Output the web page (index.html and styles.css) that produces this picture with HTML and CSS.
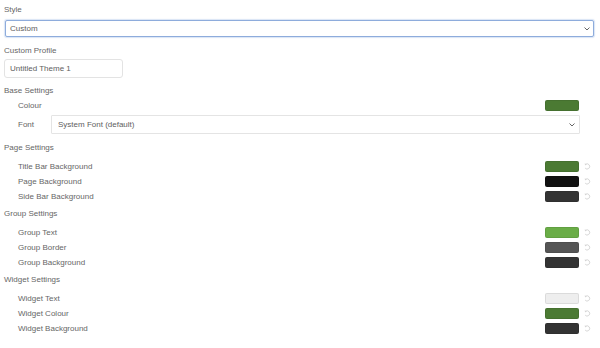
FILE: index.html
```html
<!DOCTYPE html>
<html lang="en">
<head>
    <meta charset="UTF-8">
    <meta name="viewport" content="width=device-width, initial-scale=1.0">
    <title>Theme Settings</title>
    <link rel="stylesheet" href="styles.css">
</head>
<body>
    <div class="settings">
        <div class="label top">Style</div>
        <div class="select style-select">
            <span>Custom</span>
            <svg class="chevron" width="6" height="4" viewBox="0 0 6 4"><path d="M0.5 0.5 L3 3 L5.5 0.5" fill="none" stroke="#666" stroke-width="1"/></svg>
        </div>

        <div class="label profile-label">Custom Profile</div>
        <div class="text-input">Untitled Theme 1</div>

        <div class="label heading base-heading">Base Settings</div>
        <div class="row">
            <span class="name">Colour</span>
            <span class="swatch" style="background:#4b7a33"></span>
            <span class="reset-col"></span>
        </div>
        <div class="row font-row">
            <span class="name font-name">Font</span>
            <div class="select font-select">
                <span>System Font (default)</span>
                <svg class="chevron" width="6" height="4" viewBox="0 0 6 4"><path d="M0.5 0.5 L3 3 L5.5 0.5" fill="none" stroke="#666" stroke-width="1"/></svg>
            </div>
            <span class="reset-col"></span>
        </div>

        <div class="label heading">Page Settings</div>
        <div class="group">
            <div class="row">
                <span class="name">Title Bar Background</span>
                <span class="swatch" style="background:#4b7a33"></span>
                <span class="reset-col"><svg class="reset" width="7" height="7" viewBox="0 0 7 7"><path d="M1.8 1.2 A2.6 2.6 0 1 1 1.2 5.2" fill="none" stroke="#d2d2d2" stroke-width="0.9"/><path d="M0.6 0.4 L2.6 1.1 L1.2 2.6 Z" fill="#d2d2d2"/></svg></span>
            </div>
            <div class="row">
                <span class="name">Page Background</span>
                <span class="swatch" style="background:#111111"></span>
                <span class="reset-col"><svg class="reset" width="7" height="7" viewBox="0 0 7 7"><path d="M1.8 1.2 A2.6 2.6 0 1 1 1.2 5.2" fill="none" stroke="#d2d2d2" stroke-width="0.9"/><path d="M0.6 0.4 L2.6 1.1 L1.2 2.6 Z" fill="#d2d2d2"/></svg></span>
            </div>
            <div class="row">
                <span class="name">Side Bar Background</span>
                <span class="swatch" style="background:#333333"></span>
                <span class="reset-col"><svg class="reset" width="7" height="7" viewBox="0 0 7 7"><path d="M1.8 1.2 A2.6 2.6 0 1 1 1.2 5.2" fill="none" stroke="#d2d2d2" stroke-width="0.9"/><path d="M0.6 0.4 L2.6 1.1 L1.2 2.6 Z" fill="#d2d2d2"/></svg></span>
            </div>
        </div>

        <div class="label heading">Group Settings</div>
        <div class="group">
            <div class="row">
                <span class="name">Group Text</span>
                <span class="swatch" style="background:#6aad47"></span>
                <span class="reset-col"><svg class="reset" width="7" height="7" viewBox="0 0 7 7"><path d="M1.8 1.2 A2.6 2.6 0 1 1 1.2 5.2" fill="none" stroke="#d2d2d2" stroke-width="0.9"/><path d="M0.6 0.4 L2.6 1.1 L1.2 2.6 Z" fill="#d2d2d2"/></svg></span>
            </div>
            <div class="row">
                <span class="name">Group Border</span>
                <span class="swatch" style="background:#555555"></span>
                <span class="reset-col"><svg class="reset" width="7" height="7" viewBox="0 0 7 7"><path d="M1.8 1.2 A2.6 2.6 0 1 1 1.2 5.2" fill="none" stroke="#d2d2d2" stroke-width="0.9"/><path d="M0.6 0.4 L2.6 1.1 L1.2 2.6 Z" fill="#d2d2d2"/></svg></span>
            </div>
            <div class="row">
                <span class="name">Group Background</span>
                <span class="swatch" style="background:#333333"></span>
                <span class="reset-col"><svg class="reset" width="7" height="7" viewBox="0 0 7 7"><path d="M1.8 1.2 A2.6 2.6 0 1 1 1.2 5.2" fill="none" stroke="#d2d2d2" stroke-width="0.9"/><path d="M0.6 0.4 L2.6 1.1 L1.2 2.6 Z" fill="#d2d2d2"/></svg></span>
            </div>
        </div>

        <div class="label heading">Widget Settings</div>
        <div class="group">
            <div class="row">
                <span class="name">Widget Text</span>
                <span class="swatch" style="background:#eeeeee"></span>
                <span class="reset-col"><svg class="reset" width="7" height="7" viewBox="0 0 7 7"><path d="M1.8 1.2 A2.6 2.6 0 1 1 1.2 5.2" fill="none" stroke="#d2d2d2" stroke-width="0.9"/><path d="M0.6 0.4 L2.6 1.1 L1.2 2.6 Z" fill="#d2d2d2"/></svg></span>
            </div>
            <div class="row">
                <span class="name">Widget Colour</span>
                <span class="swatch" style="background:#4b7a33"></span>
                <span class="reset-col"><svg class="reset" width="7" height="7" viewBox="0 0 7 7"><path d="M1.8 1.2 A2.6 2.6 0 1 1 1.2 5.2" fill="none" stroke="#d2d2d2" stroke-width="0.9"/><path d="M0.6 0.4 L2.6 1.1 L1.2 2.6 Z" fill="#d2d2d2"/></svg></span>
            </div>
            <div class="row">
                <span class="name">Widget Background</span>
                <span class="swatch" style="background:#333333"></span>
                <span class="reset-col"><svg class="reset" width="7" height="7" viewBox="0 0 7 7"><path d="M1.8 1.2 A2.6 2.6 0 1 1 1.2 5.2" fill="none" stroke="#d2d2d2" stroke-width="0.9"/><path d="M0.6 0.4 L2.6 1.1 L1.2 2.6 Z" fill="#d2d2d2"/></svg></span>
            </div>
        </div>
    </div>
</body>
</html>
```

FILE: styles.css
```css
body {
    margin: 0;
    padding: 0;
    background-color: #fff;
    font-family: "Liberation Sans", Arial, sans-serif;
    font-size: 8px;
    color: #666;
}

.settings {
    padding: 2px 6px 0 4px;
}

.label {
    line-height: 15px;
}

.select {
    display: flex;
    align-items: center;
    justify-content: space-between;
    box-sizing: border-box;
    background: #fff;
    color: #5e5e5e;
}

.style-select {
    margin: 3px 0 0 1px;
    height: 17px;
    padding: 0 3px 0 4px;
    border: 1px solid #8eacdc;
    border-radius: 2px;
    box-shadow: 0 0 1px 1px rgba(150, 180, 225, 0.35);
}

.profile-label {
    margin-top: 6px;
}

.text-input {
    box-sizing: border-box;
    width: 119px;
    height: 19px;
    margin-top: 1px;
    padding: 0 5px;
    line-height: 17px;
    border: 1px solid #e3e3e3;
    border-radius: 3px;
    color: #5e5e5e;
}

.heading {
    margin-top: 6px;
    margin-bottom: 4px;
}

.base-heading {
    margin-top: 5px;
    margin-bottom: 0;
}

.group {
    margin-bottom: 2px;
}

.group + .heading {
    margin-top: 0;
}

.row {
    display: flex;
    align-items: center;
    height: 15px;
    margin-left: 14px;
}

.name {
    flex: 1;
}

.swatch {
    box-sizing: border-box;
    width: 34px;
    height: 11px;
    border-radius: 2px;
    border: 1px solid rgba(0, 0, 0, 0.08);
}

.reset-col {
    display: flex;
    align-items: center;
    width: 15px;
    padding-left: 5px;
    box-sizing: border-box;
}

.font-row {
    height: 19px;
    margin-top: 2px;
}

.font-name {
    flex: none;
    width: 33px;
}

.font-select {
    flex: 1;
    height: 19px;
    margin-right: -1px;
    padding: 0 4px 0 6px;
    border: 1px solid #e4e4e4;
    border-radius: 1px;
}

.chevron {
    display: block;
}

.reset {
    display: block;
}
```
